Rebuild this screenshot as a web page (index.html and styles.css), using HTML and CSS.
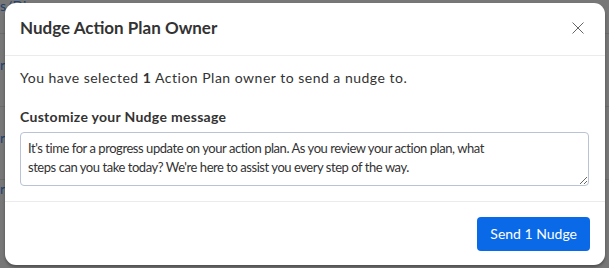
FILE: index.html
```html
<!DOCTYPE html>
<html>
<head>
<meta charset="utf-8">
<link rel="stylesheet" href="styles.css">
</head>
<body>
<div class="backdrop">
  <div class="bg-row bg-first"><span class="bg-link">s/Di</span></div>
  <div class="bg-row"><span class="bg-link">r</span></div>
  <div class="bg-row"><span class="bg-link">r</span></div>
  <div class="bg-row bg-last"><span class="bg-link">r<br>s</span></div>
</div>
<div class="modal">
  <div class="modal-header">
    <h1 class="modal-title">Nudge Action Plan Owner</h1>
    <button class="close" aria-label="Close">
      <svg width="12" height="12" viewBox="0 0 12 12"><path d="M0.5 0.5L11.5 11.5M11.5 0.5L0.5 11.5" stroke="#666" stroke-width="1" fill="none"/></svg>
    </button>
  </div>
  <div class="modal-body">
    <p class="intro">You have selected <b>1</b> Action Plan owner to send a nudge to.</p>
    <label class="field-label" for="msg">Customize your Nudge message</label>
    <textarea id="msg" class="message">It's time for a progress update on your action plan. As you review your action plan, what
steps can you take today? We're here to assist you every step of the way.</textarea>
  </div>
  <div class="modal-footer">
    <button class="btn-primary">Send 1 Nudge</button>
  </div>
</div>
</body>
</html>
```
FILE: styles.css
```css
html, body {
  margin: 0;
  padding: 0;
}
body {
  background: #777;
  width: 609px;
  height: 268px;
  overflow: hidden;
  position: relative;
  font-family: "Lato", "Liberation Sans", sans-serif;
  color: #333;
}
.backdrop {
  position: absolute;
  inset: 0;
  display: flex;
  flex-direction: column;
}
.bg-row {
  height: 73px;
  flex: none;
  border-bottom: 1px solid #6c6c6c;
  box-sizing: border-box;
  font-size: 14px;
  color: #22416f;
  padding-top: 22px;
  line-height: 18px;
}
.bg-first {
  height: 34px;
  padding-top: 0;
  line-height: 12px;
}
.bg-last {
  height: 15px;
  border-bottom: 0;
  padding-top: 0;
  overflow: hidden;
}
.modal {
  position: absolute;
  left: 5px;
  top: 3px;
  width: 600px;
  height: 262px;
  background: #fff;
  border-radius: 11px;
  box-shadow: 0 2px 3px rgba(0, 0, 0, 0.35);
  display: flex;
  flex-direction: column;
  box-sizing: border-box;
}
.modal-header {
  height: 53px;
  flex: none;
  border-bottom: 1px solid #ebebeb;
  display: flex;
  align-items: center;
  justify-content: space-between;
  padding: 0 21px 3px 15px;
  box-sizing: border-box;
}
.modal-title {
  margin: 0;
  font-size: 17px;
  font-weight: 700;
  color: #333;
}
.close {
  border: 0;
  background: none;
  padding: 0;
  width: 12px;
  height: 12px;
  display: flex;
}
.modal-body {
  padding: 13px 16px 15px 15px;
  height: 145px;
  box-sizing: border-box;
  flex: none;
  display: flex;
  flex-direction: column;
}
.intro {
  margin: 0 0 21px 0;
  font-size: 14px;
  line-height: 18px;
  letter-spacing: 0.5px;
}
.field-label {
  font-size: 14px;
  font-weight: 700;
  line-height: 18px;
  letter-spacing: 0.3px;
  margin-bottom: 6px;
}
.message {
  font-family: inherit;
  font-size: 13px;
  letter-spacing: -0.45px;
  line-height: 19px;
  color: #333;
  border: 1px solid #b9c3d3;
  border-radius: 4px;
  height: 54px;
  padding: 6px 7px;
  box-sizing: border-box;
  resize: vertical;
  width: 100%;
  margin: 0;
}
.modal-footer {
  border-top: 1px solid #ebebeb;
  flex: 1;
  box-sizing: border-box;
  display: flex;
  align-items: center;
  justify-content: flex-end;
  padding: 0 15px 0;
}
.btn-primary {
  background: #0a69e6;
  color: #fff;
  border: 0;
  border-radius: 4px;
  height: 34px;
  padding: 0 13px;
  font-family: inherit;
  font-size: 14px;
}
```
